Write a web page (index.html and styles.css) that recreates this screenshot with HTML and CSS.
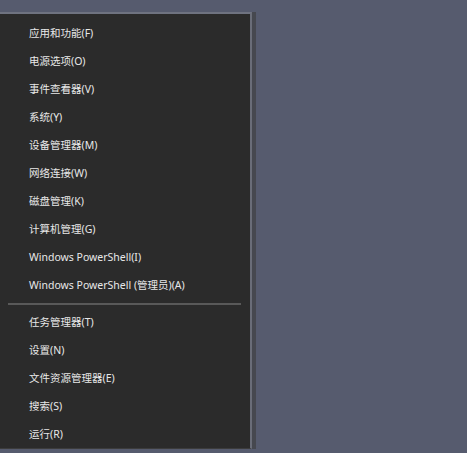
FILE: index.html
```html
<!DOCTYPE html>
<html lang="zh-CN">
<head>
<meta charset="utf-8">
<link rel="stylesheet" href="styles.css">
</head>
<body>
<div class="page">
  <div class="menu">
    <div class="group">
      <div class="item">应用和功能(F)</div>
      <div class="item">电源选项(O)</div>
      <div class="item">事件查看器(V)</div>
      <div class="item">系统(Y)</div>
      <div class="item">设备管理器(M)</div>
      <div class="item">网络连接(W)</div>
      <div class="item">磁盘管理(K)</div>
      <div class="item">计算机管理(G)</div>
      <div class="item">Windows PowerShell(I)</div>
      <div class="item">Windows PowerShell (管理员)(A)</div>
    </div>
    <div class="sep"></div>
    <div class="group">
      <div class="item">任务管理器(T)</div>
      <div class="item">设置(N)</div>
      <div class="item">文件资源管理器(E)</div>
      <div class="item">搜索(S)</div>
      <div class="item">运行(R)</div>
    </div>
  </div>
</div>
</body>
</html>
```
FILE: styles.css
```css
html, body {
  margin: 0;
  padding: 0;
  background: #565b6e;
  height: 100%;
  overflow: hidden;
}
.page {
  padding-top: 12px;
}
.menu {
  width: 250px;
  background: #2b2b2b;
  border-top: 2px solid #6f7380;
  border-right: 2px solid #6a6d78;
  border-bottom: 1px solid #3c3c3c;
  box-shadow: 4px 0 0 #46484f;
  padding: 5px 0 0;
  font-family: "Noto Sans", "Noto Sans CJK SC", sans-serif;
  font-size: 10.5px;
  color: #e8e8e8;
}
.item {
  height: 28px;
  line-height: 28px;
  padding-left: 29px;
  white-space: nowrap;
}
.sep {
  height: 2px;
  background: #595959;
  margin: 4px 9px 3px 8px;
}
```
